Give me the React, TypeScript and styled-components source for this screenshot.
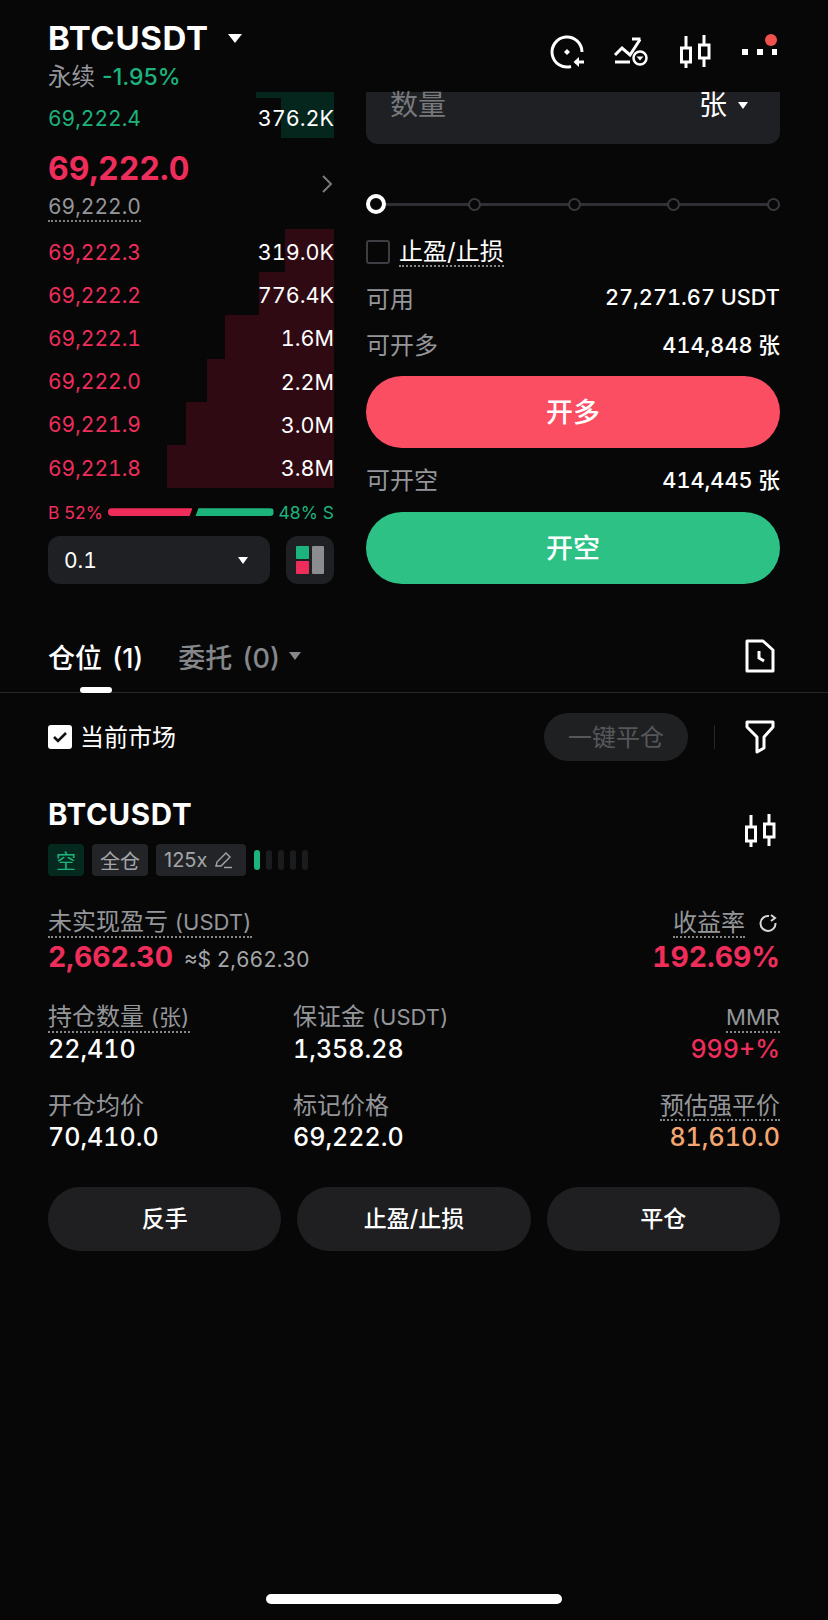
import styled, { createGlobalStyle } from 'styled-components';

const RED = '#ef2d5b';
const GREEN = '#1cb37c';
const GREY = '#949699';
const PANEL = '#1f2023';
const BG = '#070708';

const GlobalStyle = createGlobalStyle`
  html, body { margin: 0; padding: 0; background: ${BG}; }
  body {
    font-family: Inter, "Noto Sans CJK SC", sans-serif;
    font-variant-numeric: tabular-nums;
    color: #fff;
  }
  * { box-sizing: border-box; }
`;

const Page = styled.div`
  width: 828px;
  height: 1620px;
  padding: 0 48px;
  position: relative;
  overflow: hidden;
`;

const Header = styled.header`
  height: 92px;
  display: flex;
  justify-content: space-between;
  padding-top: 19px;
`;

const Symbol = styled.div`
  display: flex;
  align-items: center;
  gap: 19px;
  font-size: 33px;
  line-height: 38px;
  font-weight: 700;
  letter-spacing: 0.7px;
`;

const Caret = styled.i<{ $size?: number; $color?: string }>`
  display: inline-block;
  width: 0;
  height: 0;
  border-left: ${(p) => p.$size ?? 6}px solid transparent;
  border-right: ${(p) => p.$size ?? 6}px solid transparent;
  border-top: ${(p) => (p.$size ?? 6) * 1.4}px solid ${(p) => p.$color ?? '#fff'};
`;

const SubTitle = styled.div`
  display: flex;
  gap: 7px;
  align-items: center;
  margin-top: 5px;
  font-size: 23.5px;
  line-height: 30px;
  color: ${GREY};
`;

const Change = styled.span`
  color: ${GREEN};
  font-size: 23px;
  font-weight: 500;
  font-variant-numeric: proportional-nums;
`;

const HeaderIcons = styled.div`
  display: flex;
  gap: 28px;
  margin: 15px 3px 0 0;
  align-self: flex-start;
`;

const Trade = styled.section`
  display: grid;
  grid-template-columns: 286px 414px;
  gap: 32px;
`;

const Book = styled.div`
  display: flex;
  flex-direction: column;
`;

const BidRow = styled.div`
  height: 46px;
  display: flex;
  justify-content: space-between;
  align-items: center;
  padding-top: 6px;
  font-size: 21px;
  background:
    linear-gradient(#05261c, #05261c) right top / 78px 6px no-repeat,
    linear-gradient(#05261c, #05261c) right top / 53px 100% no-repeat;
`;

const AskRow = styled.div<{ $depth: number }>`
  height: 43.2px;
  display: flex;
  justify-content: space-between;
  align-items: center;
  padding-top: 3px;
  font-size: 21px;
  background: linear-gradient(#300a12, #300a12) right top / ${(p) => p.$depth}px 100% no-repeat;
`;

const Price = styled.span<{ $color: string }>`
  color: ${(p) => p.$color};
  white-space: nowrap;
`;

const BookSize = styled.span`
  font-size: 21.6px;
`;

const MidBlock = styled.div`
  height: 91px;
  display: flex;
  justify-content: space-between;
  align-items: center;
`;

const MidPrice = styled.div`
  color: ${RED};
  font-size: 32px;
  line-height: 38px;
  font-weight: 700;
  margin-top: 5px;
`;

const MarkPrice = styled.span`
  display: inline-block;
  margin-top: 6px;
  color: ${GREY};
  font-size: 21px;
  line-height: 26px;
  border-bottom: 2px dotted #7d7f82;
`;

const Ratio = styled.div`
  display: flex;
  align-items: center;
  justify-content: space-between;
  margin-top: 13px;
  height: 22px;
  font-size: 17.5px;
  font-variant-numeric: proportional-nums;
`;

const RatioBar = styled.div`
  display: flex;
  gap: 3px;
  flex: 1;
  margin: 0 5px;
`;

const RatioFill = styled.div<{ $side: 'buy' | 'sell'; $grow: number }>`
  height: 8px;
  flex: ${(p) => p.$grow} 0 0;
  background: ${(p) => (p.$side === 'buy' ? RED : GREEN)};
  border-radius: ${(p) => (p.$side === 'buy' ? '4px 0 0 4px' : '0 4px 4px 0')};
  clip-path: ${(p) =>
    p.$side === 'buy'
      ? 'polygon(0 0, 100% 0, calc(100% - 3px) 100%, 0 100%)'
      : 'polygon(3px 0, 100% 0, 100% 100%, 0 100%)'};
`;

const BookControls = styled.div`
  display: flex;
  justify-content: space-between;
  margin-top: 13px;
`;

const PrecisionSelect = styled.div`
  width: 222px;
  height: 48px;
  padding: 0 22px 0 16px;
  background: ${PANEL};
  border-radius: 12px;
  display: flex;
  align-items: center;
  justify-content: space-between;
  font-size: 21px;
`;

const LayoutButton = styled.div`
  width: 48px;
  height: 48px;
  background: ${PANEL};
  border-radius: 12px;
  display: grid;
  place-items: center;
`;

const Form = styled.div`
  display: flex;
  flex-direction: column;
`;

const QtyInput = styled.div`
  height: 52px;
  background: ${PANEL};
  border-radius: 0 0 12px 12px;
  padding: 0 32px 26px 24px;
  display: flex;
  align-items: center;
  justify-content: space-between;
  font-size: 28px;
  line-height: 26px;
  color: #77797c;
`;

const QtyUnit = styled.div`
  display: flex;
  align-items: center;
  gap: 11px;
  color: #fff;
`;

const Slider = styled.div`
  height: 20px;
  margin-top: 50px;
  display: flex;
  align-items: center;
  justify-content: space-between;
  background: linear-gradient(#2f3033, #2f3033) center / 100% 3px no-repeat;
`;

const Knob = styled.span`
  width: 20px;
  height: 20px;
  margin-right: -5px;
  border: 4px solid #fff;
  border-radius: 50%;
  background: ${BG};
`;

const Stop = styled.span`
  width: 13px;
  height: 13px;
  border: 2px solid #38393c;
  border-radius: 50%;
  background: ${BG};
`;

const TpSl = styled.div`
  display: flex;
  align-items: center;
  gap: 9px;
  height: 32px;
  margin-top: 22px;
  font-size: 24px;
`;

const EmptyCheck = styled.span`
  width: 24px;
  height: 24px;
  border: 2px solid #3d3e41;
  border-radius: 3px;
`;

const Dotted = styled.span<{ $plain?: boolean }>`
  line-height: 27px;
  display: inline-block;
  border-bottom: 2px dotted ${(p) => (p.$plain ? 'transparent' : '#85878a')};
`;

const Unit = styled.span`
  font-size: 22px;
`;

const InfoRow = styled.div<{ $top: number }>`
  display: flex;
  justify-content: space-between;
  align-items: center;
  height: 32px;
  margin-top: ${(p) => p.$top}px;
  font-size: 21.7px;
  font-weight: 500;
`;

const InfoLabel = styled.span`
  color: ${GREY};
  font-size: 24px;
  font-weight: 400;
`;

const ActionButton = styled.div<{ $color: string; $top: number }>`
  height: 72px;
  padding-bottom: 4px;
  margin-top: ${(p) => p.$top}px;
  border-radius: 36px;
  background: ${(p) => p.$color};
  display: grid;
  place-items: center;
  font-size: 27px;
  font-weight: 500;
`;

const BottomPanel = styled.section`
  margin: 16px -48px 0;
`;

const Tabs = styled.div`
  height: 93px;
  padding: 0 48px;
  display: flex;
  align-items: stretch;
  gap: 35px;
  border-bottom: 1px solid #26272a;
`;

const Tab = styled.div<{ $active?: boolean }>`
  position: relative;
  display: flex;
  align-items: center;
  gap: 9px;
  padding-top: 20px;
  font-size: 27px;
  font-weight: 500;
  font-variant-numeric: proportional-nums;
  word-spacing: 3px;
  color: ${(p) => (p.$active ? '#fff' : '#85878a')};
  &::after {
    content: '';
    display: ${(p) => (p.$active ? 'block' : 'none')};
    position: absolute;
    left: 32px;
    bottom: -1px;
    width: 32px;
    height: 6px;
    border-radius: 3px;
    background: #fff;
  }
`;

const TabsEnd = styled.div`
  margin-left: auto;
  display: flex;
  align-items: center;
  padding-top: 20px;
`;

const Positions = styled.div`
  padding: 0 48px;
`;

const FilterRow = styled.div`
  height: 88px;
  display: flex;
  align-items: center;
  font-size: 24px;
  gap: 8px;
`;

const CheckedBox = styled.span`
  width: 24px;
  height: 24px;
  border-radius: 3px;
  background: #fff;
  display: grid;
  place-items: center;
`;

const FilterLabel = styled.span`
  padding-bottom: 4px;
`;

const CloseAll = styled.div`
  margin-left: auto;
  width: 144px;
  height: 48px;
  padding-bottom: 4px;
  border-radius: 24px;
  background: #1f2022;
  color: #55575a;
  display: grid;
  place-items: center;
  font-size: 24px;
`;

const VRule = styled.span`
  width: 1px;
  height: 24px;
  margin: 0 21px 0 18px;
  background: #26272a;
`;

const TitleRow = styled.div`
  display: flex;
  justify-content: space-between;
  align-items: flex-start;
  margin-top: 15px;
`;

const PosTitle = styled.div`
  font-size: 29.5px;
  line-height: 36px;
  font-weight: 700;
  letter-spacing: 0.7px;
`;

const PosIcon = styled.div`
  margin: 17px 2px 0 0;
`;

const Tags = styled.div`
  display: flex;
  align-items: center;
  gap: 8px;
  margin-top: -9px;
  font-variant-numeric: proportional-nums;
`;

const Tag = styled.span<{ $green?: boolean }>`
  display: inline-flex;
  align-items: center;
  gap: 8px;
  height: 32px;
  padding: 0 8px;
  border-radius: 4px;
  font-size: 20px;
  background: ${(p) => (p.$green ? '#05291e' : '#232427')};
  color: ${(p) => (p.$green ? GREEN : '#a4a6a9')};
  svg {
    margin-right: 5px;
  }
`;

const Risk = styled.div`
  display: flex;
  gap: 6px;
`;

const RiskBar = styled.span<{ $on?: boolean }>`
  width: 6px;
  height: 20px;
  border-radius: 3px;
  background: ${(p) => (p.$on ? GREEN : '#1b1c1e')};
`;

const PnlRow = styled.div`
  display: flex;
  justify-content: space-between;
  margin-top: 32px;
`;

const PnlColumn = styled.div<{ $right?: boolean }>`
  display: flex;
  flex-direction: column;
  align-items: ${(p) => (p.$right ? 'flex-end' : 'flex-start')};
`;

const Label = styled.div`
  display: flex;
  align-items: center;
  gap: 13px;
  height: 30px;
  font-size: 24px;
  color: ${GREY};
`;

const PnlLine = styled.div`
  display: flex;
  align-items: baseline;
  gap: 11px;
  height: 39px;
`;

const PnlValue = styled.span<{ $color: string }>`
  font-size: 28.3px;
  line-height: 39px;
  font-weight: 700;
  color: ${(p) => p.$color};
`;

const PnlFiat = styled.span`
  font-size: 21px;
  color: #a4a6a9;
`;

const RefreshIcon = styled.svg`
  margin-right: 2px;
`;

const StatGrid = styled.div`
  display: grid;
  grid-template-columns: 245px 1fr auto;
  row-gap: 26px;
  margin-top: 26px;
`;

const Stat = styled.div<{ $right?: boolean }>`
  display: flex;
  flex-direction: column;
  align-items: ${(p) => (p.$right ? 'flex-end' : 'flex-start')};
`;

const StatValue = styled.div<{ $color?: string }>`
  font-size: 25px;
  line-height: 32px;
  font-weight: 500;
  color: ${(p) => p.$color ?? '#fff'};
`;

const Buttons = styled.div`
  display: grid;
  grid-template-columns: repeat(3, 1fr);
  gap: 16px;
  margin-top: 34px;
`;

const PosButton = styled.div`
  height: 64px;
  padding-bottom: 4px;
  border-radius: 32px;
  background: #1f1f21;
  display: grid;
  place-items: center;
  font-size: 23px;
  font-weight: 500;
`;

const HomeBar = styled.div`
  position: absolute;
  left: 266px;
  bottom: 16px;
  width: 296px;
  height: 10px;
  border-radius: 5px;
  background: #fff;
`;

function CandleIcon() {
  return (
    <svg width="36" height="36" viewBox="0 0 36 36" fill="none" stroke="#fff" strokeWidth="3">
      <path d="M9 2V14M9 28V34M27 1V11M27 24V33" />
      <rect x="4.5" y="14" width="9" height="14" />
      <rect x="22.5" y="11" width="9.5" height="13" />
    </svg>
  );
}

function HeaderIconSet() {
  return (
    <HeaderIcons>
      <svg width="36" height="36" viewBox="0 0 36 36" fill="none" stroke="#fff" strokeWidth="3">
        <path d="M33 18A15 15 0 1 0 22 32.5" />
        <path d="M18 15l3 3-3 3-3-3z" fill="#fff" stroke="none" />
        <path d="M26 28H35" />
        <path d="M30 23l-5.5 5 5.5 5z" fill="#fff" stroke="none" />
      </svg>
      <svg width="36" height="36" viewBox="0 0 36 36" fill="none" stroke="#fff" strokeWidth="3">
        <path d="M2 21L9 14L17 21L27 5.5" />
        <path d="M19 5H27.5" />
        <path d="M2 28H17" />
        <circle cx="27" cy="24" r="6.5" strokeWidth="2.5" fill="#070708" />
        <path d="M23.5 22.5H30.5L27 26.5z" fill="#fff" stroke="none" />
      </svg>
      <CandleIcon />
      <svg width="36" height="36" viewBox="0 0 36 36" fill="#fff">
        <rect x="1" y="15" width="6" height="6" />
        <rect x="16" y="15" width="6" height="6" />
        <rect x="31" y="15" width="5" height="6" />
        <circle cx="30" cy="6" r="6" fill="#f0524b" />
      </svg>
    </HeaderIcons>
  );
}

const asks = [
  { price: '69,222.3', size: '319.0K', depth: 49 },
  { price: '69,222.2', size: '776.4K', depth: 75 },
  { price: '69,222.1', size: '1.6M', depth: 109 },
  { price: '69,222.0', size: '2.2M', depth: 127 },
  { price: '69,221.9', size: '3.0M', depth: 148 },
  { price: '69,221.8', size: '3.8M', depth: 167 },
];

export default function App() {
  return (
    <Page>
      <GlobalStyle />
      <Header>
        <div>
          <Symbol>
            BTCUSDT
            <Caret $size={7} />
          </Symbol>
          <SubTitle>
            永续 <Change>-1.95%</Change>
          </SubTitle>
        </div>
        <HeaderIconSet />
      </Header>

      <Trade>
        <Book>
          <BidRow>
            <Price $color={GREEN}>69,222.4</Price>
            <BookSize>376.2K</BookSize>
          </BidRow>
          <MidBlock>
            <div>
              <MidPrice>69,222.0</MidPrice>
              <MarkPrice>69,222.0</MarkPrice>
            </div>
            <svg width="14" height="20" viewBox="0 0 14 20" fill="none" stroke="#77797c" strokeWidth="2">
              <path d="M3 2L11 10L3 18" />
            </svg>
          </MidBlock>
          {asks.map((row) => (
            <AskRow key={row.depth} $depth={row.depth}>
              <Price $color={RED}>{row.price}</Price>
              <BookSize>{row.size}</BookSize>
            </AskRow>
          ))}
          <Ratio>
            <Price $color={RED}>B 52%</Price>
            <RatioBar>
              <RatioFill $side="buy" $grow={52} />
              <RatioFill $side="sell" $grow={48} />
            </RatioBar>
            <Price $color={GREEN}>48% S</Price>
          </Ratio>
          <BookControls>
            <PrecisionSelect>
              0.1
              <Caret $size={5.5} />
            </PrecisionSelect>
            <LayoutButton>
              <svg width="28" height="28" viewBox="0 0 28 28">
                <rect x="0" y="0" width="13" height="13" rx="1" fill={GREEN} />
                <rect x="0" y="15" width="13" height="13" rx="1" fill={RED} />
                <rect x="16" y="0" width="12" height="28" rx="1" fill="#8b8c90" />
              </svg>
            </LayoutButton>
          </BookControls>
        </Book>

        <Form>
          <QtyInput>
            数量
            <QtyUnit>
              张
              <Caret $size={5} />
            </QtyUnit>
          </QtyInput>
          <Slider>
            <Knob />
            <Stop />
            <Stop />
            <Stop />
            <Stop />
          </Slider>
          <TpSl>
            <EmptyCheck />
            <Dotted>止盈/止损</Dotted>
          </TpSl>
          <InfoRow $top={13}>
            <InfoLabel>可用</InfoLabel>
            <span>27,271.67 USDT</span>
          </InfoRow>
          <InfoRow $top={14}>
            <InfoLabel>可开多</InfoLabel>
            <span>414,848 张</span>
          </InfoRow>
          <ActionButton $color="#fb4e63" $top={17}>开多</ActionButton>
          <InfoRow $top={14}>
            <InfoLabel>可开空</InfoLabel>
            <span>414,445 张</span>
          </InfoRow>
          <ActionButton $color="#2dc186" $top={18}>开空</ActionButton>
        </Form>
      </Trade>

      <BottomPanel>
        <Tabs>
          <Tab $active>仓位 (1)</Tab>
          <Tab>
            委托 (0)
            <Caret $size={6} $color="#85878a" />
          </Tab>
          <TabsEnd>
            <svg width="36" height="36" viewBox="0 0 36 36" fill="none" stroke="#fff" strokeWidth="3">
              <path d="M3 3H19L29 12V33H3Z" strokeLinejoin="round" />
              <path d="M15 13V20L20 23" />
            </svg>
          </TabsEnd>
        </Tabs>
        <Positions>
          <FilterRow>
            <CheckedBox>
              <svg width="16" height="14" viewBox="0 0 16 14" fill="none" stroke="#111" strokeWidth="2.6">
                <path d="M2 7L6 11L14 3" />
              </svg>
            </CheckedBox>
            <FilterLabel>当前市场</FilterLabel>
            <CloseAll>一键平仓</CloseAll>
            <VRule />
            <svg width="36" height="36" viewBox="0 0 36 36" fill="none" stroke="#fff" strokeWidth="3" strokeLinejoin="round">
              <path d="M3 3H29V8L20 18V29L13 33V18L3 8Z" />
            </svg>
          </FilterRow>
          <TitleRow>
            <PosTitle>BTCUSDT</PosTitle>
            <PosIcon>
              <CandleIcon />
            </PosIcon>
          </TitleRow>
          <Tags>
            <Tag $green>空</Tag>
            <Tag>全仓</Tag>
            <Tag>
              125x
              <svg width="18" height="18" viewBox="0 0 18 18" fill="none" stroke="#a4a6a9" strokeWidth="1.4">
                <path d="M1 15L2 11L11 2L15 6L6 15Z" />
                <path d="M9 16.5H17" />
              </svg>
            </Tag>
            <Risk>
              <RiskBar $on />
              <RiskBar />
              <RiskBar />
              <RiskBar />
              <RiskBar />
            </Risk>
          </Tags>
          <PnlRow>
            <PnlColumn>
              <Label>
                <Dotted>未实现盈亏 <Unit>(USDT)</Unit></Dotted>
              </Label>
              <PnlLine>
                <PnlValue $color={RED}>2,662.30</PnlValue>
                <PnlFiat>≈$ 2,662.30</PnlFiat>
              </PnlLine>
            </PnlColumn>
            <PnlColumn $right>
              <Label>
                <Dotted>收益率</Dotted>
                <RefreshIcon width="20" height="20" viewBox="0 0 20 20" fill="none" stroke="#d8d9da" strokeWidth="2">
                  <path d="M11 3A7.5 7.5 0 1 0 17.5 10" />
                  <path d="M13 2L17 5L13 8" />
                </RefreshIcon>
              </Label>
              <PnlLine>
                <PnlValue $color={RED}>192.69%</PnlValue>
              </PnlLine>
            </PnlColumn>
          </PnlRow>
          <StatGrid>
            <Stat>
              <Label>
                <Dotted>持仓数量 <Unit>(张)</Unit></Dotted>
              </Label>
              <StatValue>22,410</StatValue>
            </Stat>
            <Stat>
              <Label>
                <Dotted $plain>保证金 <Unit>(USDT)</Unit></Dotted>
              </Label>
              <StatValue>1,358.28</StatValue>
            </Stat>
            <Stat $right>
              <Label>
                <Dotted><Unit>MMR</Unit></Dotted>
              </Label>
              <StatValue $color={RED}>999+%</StatValue>
            </Stat>
            <Stat>
              <Label>
                <Dotted $plain>开仓均价</Dotted>
              </Label>
              <StatValue>70,410.0</StatValue>
            </Stat>
            <Stat>
              <Label>
                <Dotted $plain>标记价格</Dotted>
              </Label>
              <StatValue>69,222.0</StatValue>
            </Stat>
            <Stat $right>
              <Label>
                <Dotted>预估强平价</Dotted>
              </Label>
              <StatValue $color="#f4a671">81,610.0</StatValue>
            </Stat>
          </StatGrid>
          <Buttons>
            <PosButton>反手</PosButton>
            <PosButton>止盈/止损</PosButton>
            <PosButton>平仓</PosButton>
          </Buttons>
        </Positions>
      </BottomPanel>
      <HomeBar />
    </Page>
  );
}
